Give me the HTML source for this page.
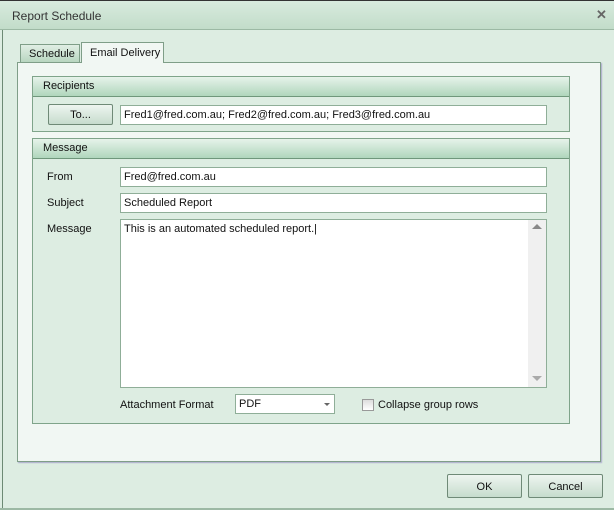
<!DOCTYPE html><html><head><style>
body{margin:0;width:614px;height:510px;overflow:hidden;background:#ddede2;font-family:"Liberation Sans",sans-serif;font-size:11px;color:#111;position:relative}
div,span{position:absolute;box-sizing:border-box}
.title{left:0;top:0;width:614px;height:30px;background:linear-gradient(#d8ebde,#c2dcc9);border-top:1px solid #333;border-bottom:1px solid #9cb9a4}
.hdr{background:linear-gradient(#e6f3ea,#b0d6bc);border-bottom:1px solid #6f977b;height:20px;left:0;right:0;top:0;padding:3px 0 0 10px;font-size:11px}
.grp{border:1px solid #7fa48a;background:#ddede2}
.inp{background:#fff;border:1px solid #8fae98;height:20px;padding:3px 3px;white-space:nowrap}
.btn{background:linear-gradient(#eef5f0,#c6dccd);border:1px solid #6f8a77;border-radius:2px;text-align:center;padding-top:4px}
.lbl{white-space:nowrap}
</style></head><body>
<div class="title"><span style="left:12px;top:8px;font-size:12px;color:#333">Report Schedule</span><span style="left:177px;top:6px;font-size:14px;color:#555;font-weight:bold;left:178px;display:none"></span><span style="left:178px"></span><span style="left:596px;top:6px;font-size:13px;color:#666;font-weight:bold">✕</span></div>
<div style="left:2px;top:30px;width:1px;height:480px;background:#6c8a74"></div>
<div style="left:17px;top:62px;width:584px;height:400px;background:#f1f7f3;border:1px solid #7f9e88;box-shadow:1px 1px 1px #aac"></div>
<div style="left:20px;top:44px;width:60px;height:19px;background:linear-gradient(#e0eee4,#b8d6c0);border:1px solid #7f9e88;padding:3px 0 0 8px">Schedule</div>
<div style="left:81px;top:42px;width:83px;height:21px;background:#f1f7f3;border:1px solid #7f9e88;border-bottom:none;padding:4px 0 0 8px">Email Delivery</div>
<div class="grp" style="left:32px;top:76px;width:538px;height:56px"><div class="hdr">Recipients</div></div>
<div class="btn" style="left:48px;top:104px;width:65px;height:21px">To...</div>
<div class="inp" style="left:120px;top:105px;width:427px">Fred1@fred.com.au; Fred2@fred.com.au; Fred3@fred.com.au</div>
<div class="grp" style="left:32px;top:138px;width:538px;height:286px"><div class="hdr">Message</div></div>
<span class="lbl" style="left:47px;top:171px">From</span>
<span class="lbl" style="left:47px;top:197px">Subject</span>
<span class="lbl" style="left:47px;top:223px">Message</span>
<div class="inp" style="left:120px;top:167px;width:427px">Fred@fred.com.au</div>
<div class="inp" style="left:120px;top:193px;width:427px">Scheduled Report</div>
<div class="inp" style="left:120px;top:219px;width:427px;height:169px">This is an automated scheduled report.|</div>
<div style="left:528px;top:220px;width:18px;height:167px;background:#f0f0f0"><span style="left:4px;top:4px;border:5px solid transparent;border-bottom:5px solid #888;border-top:none"></span><span style="left:4px;top:156px;border:5px solid transparent;border-top:5px solid #aaa;border-bottom:none"></span></div>
<span class="lbl" style="left:120px;top:399px">Attachment Format</span>
<div class="inp" style="left:235px;top:394px;width:100px;padding-top:3px">PDF<span style="left:88px;top:8px;border:3px solid transparent;border-top:3px solid #666;border-bottom:none"></span></div>
<div style="left:362px;top:399px;width:12px;height:12px;border:1px solid #999;background:linear-gradient(#ddd,#fff)"></div>
<span class="lbl" style="left:378px;top:399px">Collapse group rows</span>
<div class="btn" style="left:447px;top:474px;width:75px;height:24px;padding-top:6px">OK</div>
<div class="btn" style="left:528px;top:474px;width:75px;height:24px;padding-top:6px">Cancel</div>
<div style="left:0;top:508px;width:614px;height:2px;background:#9cb9a4"></div>
</body></html>
